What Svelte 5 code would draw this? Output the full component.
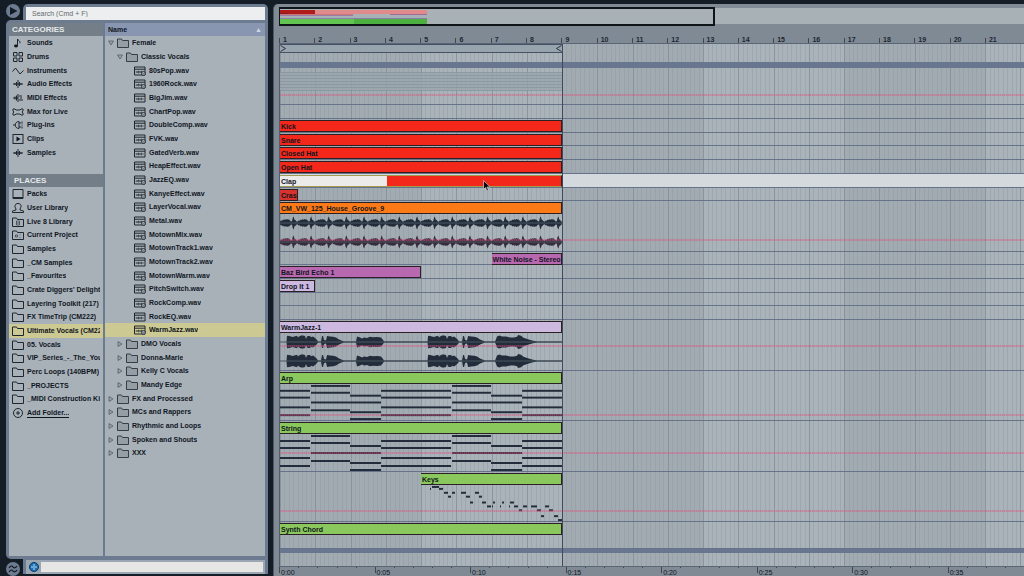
<script lang="ts">
  interface TreeRow {
    name: string;
    depth: number;
    kind: 'folder' | 'file';
    open?: boolean;
    warped?: boolean;
  }

  interface Lane {
    name?: string;
    start?: number;
    bars?: number;
    color?: string;
    height: number;
    body?: 'drums' | 'vocal' | 'chords' | 'keys' | 'group';
    automation?: number;
    editing?: boolean;
  }

  const categories = [
    ['note', 'Sounds'],
    ['drums', 'Drums'],
    ['wave', 'Instruments'],
    ['audio', 'Audio Effects'],
    ['midi', 'MIDI Effects'],
    ['max', 'Max for Live'],
    ['plug', 'Plug-ins'],
    ['clip', 'Clips'],
    ['audio', 'Samples'],
  ];

  const places = [
    ['pack', 'Packs'],
    ['user', 'User Library'],
    ['live8', 'Live 8 Library'],
    ['project', 'Current Project'],
    ['place', 'Samples'],
    ['place', '_CM Samples'],
    ['place', '_Favourites'],
    ['place', "Crate Diggers' Delight"],
    ['place', 'Layering Toolkit (217)'],
    ['place', 'FX TimeTrip (CM222)'],
    ['place', 'Ultimate Vocals (CM223)'],
    ['place', '05. Vocals'],
    ['place', 'VIP_Series_-_The_Young'],
    ['place', 'Perc Loops (140BPM)'],
    ['place', '_PROJECTS'],
    ['place', '_MIDI Construction Kits'],
    ['add', 'Add Folder...'],
  ];

  const plainFiles = ['BigJim', 'DoubleComp', 'GatedVerb', 'MotownTrack2', 'RockEQ'];
  const files =
    '80sPop 1960Rock BigJim ChartPop DoubleComp FVK GatedVerb HeapEffect JazzEQ KanyeEffect LayerVocal Metal MotownMix MotownTrack1 MotownTrack2 MotownWarm PitchSwitch RockComp RockEQ WarmJazz'.split(
      ' ',
    );

  const folder = (name: string, depth: number, open = false): TreeRow => ({
    name,
    depth,
    kind: 'folder',
    open,
  });

  const tree: TreeRow[] = [
    folder('Female', 0, true),
    folder('Classic Vocals', 1, true),
    ...files.map((f): TreeRow => ({
      name: `${f}.wav`,
      depth: 2,
      kind: 'file',
      warped: !plainFiles.includes(f),
    })),
    folder('DMO Vocals', 1),
    folder('Donna-Marie', 1),
    folder('Kelly C Vocals', 1),
    folder('Mandy Edge', 1),
    folder('FX and Processed', 0),
    folder('MCs and Rappers', 0),
    folder('Rhythmic and Loops', 0),
    folder('Spoken and Shouts', 0),
    folder('XXX', 0),
  ];

  const RED = '#f3281b';
  const GREEN = '#8ac75c';
  const PURPLE = '#b868ae';
  const LILAC = '#cdb9e0';

  const lanes: Lane[] = [
    { height: 37, body: 'group', start: 0, bars: 8, automation: 26 },
    { height: 14 },
    { name: 'Kick', start: 0, bars: 8, color: RED, height: 14 },
    { name: 'Snare', start: 0, bars: 8, color: RED, height: 13 },
    { name: 'Closed Hat', start: 0, bars: 8, color: RED, height: 14 },
    { name: 'Open Hat', start: 0, bars: 8, color: RED, height: 14 },
    { name: 'Clap', start: 0, bars: 8, color: RED, height: 14, editing: true },
    { name: 'Crash', start: 0, bars: 0.52, color: '#d9322c', height: 13 },
    { name: 'CM_VW_125_House_Groove_9', start: 0, bars: 8, color: '#fb7a17', height: 51, body: 'drums', automation: 38 },
    { name: 'White Noise - Stereo', start: 6, bars: 2, color: PURPLE, height: 13 },
    { name: 'Baz Bird Echo 1', start: 0, bars: 4, color: PURPLE, height: 14 },
    { name: 'Drop It 1', start: 0, bars: 1, color: LILAC, height: 14 },
    { height: 13 },
    { height: 14 },
    { name: 'WarmJazz-1', start: 0, bars: 8, color: LILAC, height: 51, body: 'vocal', automation: 25 },
    { name: 'Arp', start: 0, bars: 8, color: GREEN, height: 50, body: 'chords', automation: 43 },
    { name: 'String', start: 0, bars: 8, color: GREEN, height: 51, body: 'chords', automation: 31 },
    { name: 'Keys', start: 4, bars: 4, color: GREEN, height: 50, body: 'keys', automation: 38 },
    { name: 'Synth Chord', start: 0, bars: 8, color: GREEN, height: 27 },
  ];

  const barNumbers = Array.from({ length: 21 }, (_, i) => i + 1);
  const times = ['0:00', '0:05', '0:10', '0:15', '0:20', '0:25', '0:30', '0:35'];

  // Mirrors an envelope of [x, amplitude] points around a centre line.
  function mirror(env: number[][], cy: number): string {
    const top = env.map(([x, a]) => `${x},${cy - a}`);
    const bottom = [...env].reverse().map(([x, a]) => `${x},${cy + a}`);
    return [...top, ...bottom].join(' ');
  }

  const beat = [
    [0, 1.4], [1, 2.6], [2, 2.2], [3, 3.4], [4, 3], [5, 3.8], [6, 3.2], [7, 4], [8, 3.4], [9, 3.6],
    [10, 2.6], [11, 1.4], [12, 1.8], [12.7, 5], [13.6, 6.4], [14.4, 3.4], [15.2, 3], [16.2, 2], [17, 1.2],
  ];
  const drumEnv = Array.from({ length: 16 }, (_, n) =>
    beat.map(([x, a]) => [x + n * 17.65, a]),
  ).flat();

  const phrase = [
    [6.5, 0.4], [7, 6.2], [9, 6], [11, 5.4], [13, 5], [15, 5.8], [17, 6.2], [18, 4.6], [19, 5.4], [21, 6.6],
    [23, 6.4], [25, 6], [26, 3], [27, 5.4], [28, 6], [30, 6], [31, 4.8], [33, 5.4], [35, 4], [37, 2],
    [38, 0.4], [41, 0.4], [42, 6], [43, 6], [44, 2], [46, 1.6], [47, 6], [50, 5.6], [53, 5.2], [56, 4.4],
    [59, 2.6], [62, 1.2], [64, 0.4],
  ];
  const vocalEnv = [
    ...phrase,
    [76, 0.4], [77, 5.4], [80, 4.6], [82, 3.4], [84, 4.4], [87, 4], [90, 5.2], [93, 4.8], [97, 5],
    [101, 4.4], [103, 2], [104, 0.4],
    ...phrase.map(([x, a]) => [x + 141, a]),
    [215, 0.4], [217, 5.4], [219, 6.4], [222, 5.4], [226, 5.4], [230, 4.6], [234, 4.4], [237, 5.2], [238, 7],
    [241, 6.2], [243, 4.4], [247, 3], [252, 1.4], [257, 0.4], [282, 0.4],
  ];

  const voicings = [
    { x: 0, w: 30, ys: [6, 13, 23, 31] },
    { x: 31, w: 39, ys: [1, 8, 18, 26] },
    { x: 70, w: 31, ys: [11, 18, 28, 35] },
    { x: 101, w: 40, ys: [6, 13, 23, 31] },
  ];
  const chordNotes = [0, 141].flatMap((off) =>
    voicings.flatMap((v) => v.ys.map((y) => ({ x: v.x + off, w: v.w, y }))),
  );

  const keyNotes = [
    [9, 1, 3], [11, 7, 1], [18, 4, 3], [23, 4, 7], [27, 3, 11], [31, 3, 7], [40, 5, 7], [45, 4, 11],
    [49, 3, 17], [54, 4, 7], [58, 3, 11], [61, 4, 17], [66, 4, 21], [71, 1, 21], [72, 2, 17],
    [79, 1, 21], [81, 2, 17], [88, 1, 21], [89, 4, 17], [93, 4, 21], [98, 3, 25], [102, 4, 21],
    [110, 6, 21], [116, 4, 25], [120, 3, 31], [124, 4, 21], [128, 4, 25], [133, 4, 31], [137, 4, 35],
  ];

  let selectedPlace = $state('Ultimate Vocals (CM223)');
  let selectedFile = $state('WarmJazz.wav');
  let query = $state('');
  let status = $state('');
  let clipName = $state('Clap');
</script>

{#snippet icon(name: string)}
  <svg class="icon" viewBox="0 0 12 10" aria-hidden="true">
    {#if name === 'note'}
      <ellipse cx="4" cy="8" rx="2" ry="1.4" class="solid" />
      <path d="M5.5 8V1c.5 1.7 3 1.8 2.5 4.2" />
    {:else if name === 'drums'}
      <path d="M1.5 .5h3.500v3.500h-3.500zM7 .5h3.500v3.500H7zM1.5 6h3.500v3.500h-3.500zM7 6h3.500v3.500H7z" />
    {:else if name === 'wave'}
      <path d="M.5 5.5L3.5 2l4.5 6L11.500 4.500" />
    {:else if name === 'audio'}
      <path d="M1 5h10M3 4v2M4.500 3v4M6 1v8M7.500 3v4M9 4v2" />
    {:else if name === 'midi'}
      <path d="M1 5h5M3 3.500v3M4.500 2.500v5M6 1v8M7 3h3M8 5h2M7 7h4" />
    {:else if name === 'max'}
      <path d="M1 4V2h2l1 1h4l1-1h2v2M1 6v2h2l1-1h4l1 1h2V6M1.500 4v2M10.500 4v2" />
    {:else if name === 'plug'}
      <path d="M1 5h2M7 1.500c-5 0-5 7 0 7zM7 3h2M7 7h2M10 1.500v2M10 6.500v2M10 4.500v1" />
    {:else if name === 'clip'}
      <rect x="1" y="0.5" width="10" height="9" />
      <path d="M4.500 2.500v5l4-2.500z" class="solid" />
    {:else if name === 'pack'}
      <path d="M1 .5h10v9H1zM1 8.500h10" />
    {:else if name === 'user'}
      <path d="M.5 9.500h11V8L8 7V6c2-3 1-5.500-2-5.500S2 3 4 6v1L.5 8z" />
    {:else if name === 'add'}
      <circle cx="6" cy="5" r="4.500" />
      <path d="M4 5h4M6 3v4" />
    {:else if name === 'file' || name === 'warped'}
      <path d="M.5 1h10.500v8H.5zM.5 3.200h10.500" />
      <path d="M1.500 6h8.500M3 5v2M4.500 4.600v2.800M6 5v2M7.500 4.600v2.800" class="thin" />
      {#if name === 'warped'}
        <circle cx="9.500" cy="7.500" r="2" class="badge" />
        <path d="M8.700 7.500l.8.700 1.200-1.600" class="thin" />
      {/if}
    {:else}
      <path d="M.5 9.500V1h4l1 1.500h6v7z" class:filled={name === 'folder'} />
      {#if name === 'live8'}
        <path d="M4.500 4h3v4h-3zM4.500 6h3" class="thin" />
      {:else if name === 'project'}
        <path d="M3.500 5h2v2h-2zM8 4.500v1M8 7v1" class="thin" />
      {/if}
    {/if}
  </svg>
{/snippet}

<div class="app">
  <aside class="browser">
    <header class="tab top">
      <button class="round" aria-label="Hide browser">
        <svg viewBox="0 0 14 14"><path d="M4 3v8l7.500-4z" /></svg>
      </button>
      <div class="shell">
        <input type="search" class="search" placeholder="Search (Cmd + F)" aria-label="Search" bind:value={query} />
      </div>
    </header>

    <div class="panes">
      <nav class="sidebar">
        <h2>CATEGORIES</h2>
        <ul>
          {#each categories as [glyph, label] (label)}
            <li><button>{@render icon(glyph)}<span>{label}</span></button></li>
          {/each}
        </ul>
        <h2 class="places">PLACES</h2>
        <ul>
          {#each places as [glyph, label] (label)}
            <li class:selected={label === selectedPlace}>
              <button onclick={() => (selectedPlace = label)}>
                {@render icon(glyph)}<span class:add={glyph === 'add'}>{label}</span>
              </button>
            </li>
          {/each}
        </ul>
      </nav>

      <section class="files">
        <button class="sort"><span>Name</span><span class="arrow">▲</span></button>
        <ul>
          {#each tree as row (row.name)}
            <li class="depth-{row.depth}" class:selected={row.name === selectedFile}>
              <button onclick={() => (selectedFile = row.name)}>
                {#if row.kind === 'folder'}
                  <svg class="twist" viewBox="0 0 6 6" aria-hidden="true">
                    <path d={row.open ? 'M.5 1h5l-2.500 4z' : 'M1 .5v5l4-2.500z'} />
                  </svg>
                  {@render icon('folder')}
                {:else}
                  {@render icon(row.warped ? 'warped' : 'file')}
                {/if}
                <span>{row.name}</span>
              </button>
            </li>
          {/each}
        </ul>
      </section>
    </div>

    <footer class="tab bottom">
      <button class="round" aria-label="Groove pool">
        <svg viewBox="0 0 14 14" class="waves">
          <path d="M3 6c2-3 3.500-2 4-1s2.500 1.500 4-1M3 10c2-3 3.500-2 4-1s2.500 1.500 4-1" />
        </svg>
      </button>
      <div class="shell">
        <button class="preview" aria-label="Preview">
          <svg viewBox="0 0 10 10"><circle cx="5" cy="5" r="4.500" /><path d="M5 2v6M3 4v2M7 4v2" /></svg>
        </button>
        <input type="text" class="status" aria-label="Preview position" bind:value={status} />
      </div>
    </footer>
  </aside>

  <main class="arrangement">
    <div class="overview">
      <div class="viewport">
        <svg viewBox="0 0 433 15" preserveAspectRatio="none" aria-hidden="true">
          <rect x="0" y="1" width="35" height="4" fill="#b01c1c" />
          <rect x="35" y="1" width="112" height="4" fill="#e08a8c" />
          <rect x="0" y="4" width="9" height="1" fill="#8c1c1c" />
          <rect x="0" y="5" width="73" height="1" fill="#c87876" />
          <rect x="0" y="6" width="73" height="1" fill="#9d7ba8" />
          <rect x="110" y="5" width="37" height="1" fill="#9d6c9c" />
          <rect x="0" y="9" width="147" height="1" fill="#8a7fa6" />
          <rect x="0" y="10" width="74" height="5" fill="#62c552" />
          <rect x="74" y="10" width="73" height="5" fill="#4bb03f" />
        </svg>
      </div>
    </div>

    <div class="ruler">
      {#each barNumbers as n (n)}
        <span>{n}</span>
      {/each}
    </div>

    <div class="canvas">
      <div class="loop">
        <svg viewBox="0 0 6 7"><path d="M.5.5L5.500 3.500.5 6.500" /></svg>
        <svg viewBox="0 0 6 7"><path d="M5.500.5L.5 3.500l5 3" /></svg>
      </div>
      <div class="scrub"></div>
      <div class="band"></div>

      {#each lanes as lane, i (i)}
        <div class="lane" class:active={lane.editing} style="height: {lane.height}px">
          {#if lane.bars}
            <div
              class="block"
              style="margin-left: calc(var(--bar) * {lane.start}); width: calc(var(--bar) * {lane.bars})"
            >
              {#if lane.editing}
                <div class="clip editing" style="background: {lane.color}">
                  <input type="text" aria-label="Clip name" bind:value={clipName} />
                </div>
              {:else if lane.name}
                <div class="clip" style="background: {lane.color}">{lane.name}</div>
              {/if}

              {#if lane.body === 'group'}
                <div class="stripes"></div>
              {:else if lane.body === 'drums' || lane.body === 'vocal'}
                <svg class="content" viewBox="0 0 282 37" preserveAspectRatio="none" aria-hidden="true">
                  {#each [9, 28] as cy (cy)}
                    <polygon
                      points={mirror(lane.body === 'drums' ? drumEnv : vocalEnv, cy)}
                      class:tinted={lane.body === 'drums' && cy === 28}
                    />
                    <rect x="0" y={cy - 0.5} width="282" height="1" class="centre" />
                  {/each}
                </svg>
              {:else if lane.body === 'chords'}
                <svg class="content" viewBox="0 0 282 37" preserveAspectRatio="none" aria-hidden="true">
                  {#each chordNotes as n, k (k)}
                    <rect x={n.x} y={n.y} width={n.w} height="2" />
                  {/each}
                </svg>
              {:else if lane.body === 'keys'}
                <svg class="content" viewBox="0 0 141 37" preserveAspectRatio="none" aria-hidden="true">
                  {#each keyNotes as [x, w, y], k (k)}
                    <rect {x} {y} width={w} height="2" />
                  {/each}
                </svg>
              {/if}
            </div>
          {/if}
          {#if lane.automation}
            <div class="automation" style="top: {lane.automation}px"></div>
          {/if}
        </div>
      {/each}

      <div class="band thin"></div>
      <div class="end-marker"></div>
      <svg class="pointer" viewBox="0 0 8 12" aria-hidden="true">
        <path d="M.5.5v9l2-2 1.500 3.500 1.500-.7L4 7h3.200z" />
      </svg>
    </div>

    <div class="times">
      {#each times as t (t)}
        <span>{t}</span>
      {/each}
    </div>
  </main>
</div>

<style>
  :global(body) {
    background: #141d25;
  }

  .app {
    display: flex;
    gap: 5px;
    height: 100vh;
    overflow: hidden;
    padding: 4px 0 0 6px;
    box-sizing: border-box;
    font: bold 7px/12px 'Liberation Sans', Arial, sans-serif;
    color: #10161f;
    background: #141d25;
  }

  .app :is(div, aside, main, nav, section, header, footer, input, span) {
    box-sizing: border-box;
  }

  button,
  input {
    margin: 0;
    padding: 0;
    border: 0;
    font: inherit;
    color: inherit;
    background: none;
  }

  ul {
    margin: 0;
    padding: 0;
    list-style: none;
  }

  .browser {
    flex: 0 0 262px;
    display: flex;
    flex-direction: column;
  }

  .tab {
    display: flex;
    gap: 3px;
    flex: none;
  }

  .tab .shell {
    flex: 1;
    display: flex;
    align-items: center;
    padding: 0 3px;
    background: #6d7b91;
  }

  .top .shell {
    height: 16px;
    padding-top: 3px;
    border-radius: 5px 5px 0 0;
  }

  .bottom .shell {
    height: 15px;
  }

  .round {
    width: 14px;
    height: 14px;
    border-radius: 50%;
    background: #6d7b91;
  }

  .bottom .round {
    margin-top: 3px;
  }

  .round svg {
    display: block;
    fill: #131c24;
  }

  .round .waves {
    fill: none;
    stroke: #131c24;
    stroke-width: 1.2;
  }

  .search {
    width: 100%;
    height: 13px;
    padding: 0 6px;
    font-weight: normal;
    background: #eceeef;
  }

  .search::placeholder {
    color: #666a6e;
    opacity: 1;
  }

  .preview {
    display: flex;
    align-items: center;
    justify-content: center;
    width: 15px;
    height: 14px;
    background: #9ba8b4;
  }

  .preview svg {
    width: 10px;
    height: 10px;
    fill: #1d6fb4;
    stroke: #123a60;
  }

  .preview path {
    stroke: #b8dcf2;
  }

  .status {
    flex: 1;
    height: 14px;
    border: 2px solid #9ba8b4;
    border-left-width: 0;
    background: #e6e7e4;
  }

  .panes {
    flex: 1;
    min-height: 0;
    display: flex;
    gap: 2px;
    padding: 3px;
    border-radius: 5px 0 0 5px;
    background: #6d7b91;
  }

  .sidebar {
    flex: 0 0 94px;
    overflow: hidden;
    background: #a8b1b8;
  }

  .files {
    flex: 1;
    background: #a8b1b8;
  }

  h2 {
    margin: 0;
    padding: 0 3px;
    font-size: 8px;
    line-height: 13px;
    color: #e6e9eb;
    background: #737e88;
  }

  .places {
    margin-top: 15px;
    padding-left: 5px;
  }

  li {
    height: 14px;
  }

  li:nth-child(3n) {
    height: 13px;
  }

  li button {
    display: flex;
    align-items: center;
    gap: 3px;
    width: 100%;
    height: 100%;
    padding: 0 3px;
    text-align: left;
    white-space: nowrap;
  }

  li span {
    overflow: hidden;
  }

  .selected {
    background: #cdc992;
  }

  .add {
    text-decoration: underline;
    text-underline-offset: 2px;
  }

  .icon {
    flex: none;
    width: 12px;
    height: 10px;
    fill: none;
    stroke: #1e2731;
    stroke-width: 1;
  }

  .icon .solid {
    fill: #10161f;
    stroke: none;
  }

  .icon .thin {
    stroke-width: 0.6;
  }

  .icon .badge {
    fill: #a8b1b8;
    stroke-width: 0.8;
  }

  .icon .filled {
    fill: #959ea5;
    stroke: #343e48;
  }

  .sort {
    display: flex;
    justify-content: space-between;
    align-items: center;
    width: 100%;
    height: 13px;
    padding: 0 3px;
    background: #8996b2;
  }

  .arrow {
    color: #cfd6e0;
  }

  .twist {
    flex: none;
    width: 6px;
    height: 6px;
    fill: #98a1a8;
    stroke: #56606a;
    stroke-width: 0.8;
  }

  .files .depth-1 button {
    padding-left: 12px;
  }

  .files .depth-2 button {
    padding-left: 29px;
  }

  .arrangement {
    --bar: calc(100% / 21.1);
    flex: 1;
    min-width: 0;
    padding: 3px 0 0 5px;
    border-left: 1px solid #4d5965;
    border-radius: 5px 0 0 0;
    background: #7f8a94;
  }

  .overview {
    height: 19px;
    background: linear-gradient(#7f8a94 1px, #a7b1b6 1px 17px, #7f8a94 17px);
  }

  .viewport {
    width: calc(var(--bar) * 12.35);
    height: 19px;
    border: 2px solid #0e1418;
    border-left-width: 1px;
  }

  .viewport svg {
    display: block;
    width: 100%;
    height: 15px;
  }

  .ruler {
    display: flex;
    height: 18px;
    padding-top: 9px;
    overflow: hidden;
    border-bottom: 1px solid #5a6675;
  }

  .ruler span {
    flex: 0 0 var(--bar);
    height: 8px;
    padding-left: 4px;
    line-height: 10px;
    color: #1d2633;
    background: linear-gradient(#3d4856, #3d4856) 0 100% / 1px 5px no-repeat;
  }

  .canvas {
    position: relative;
    border-left: 1px solid #515d6d;
    padding-bottom: 13px;
    background:
      repeating-linear-gradient(90deg, #7d899399 0 1px, transparent 1px var(--bar)),
      repeating-linear-gradient(90deg, #8a969e66 0 1px, transparent 1px calc(var(--bar) / 8)),
      repeating-linear-gradient(90deg, #a1abb1 0 calc(var(--bar) * 4), #a9b3b9 0 calc(var(--bar) * 8));
  }

  .loop {
    display: flex;
    justify-content: space-between;
    align-items: center;
    width: calc(var(--bar) * 8);
    height: 9px;
    border: solid #465163;
    border-width: 1px 0;
    background: #98a4ad;
  }

  .loop svg {
    width: 6px;
    height: 7px;
    fill: none;
    stroke: #2b3644;
  }

  .scrub {
    height: 9px;
  }

  .band {
    height: 6px;
    background: #687690;
  }

  .band.thin {
    height: 4px;
  }

  .lane {
    position: relative;
    border-bottom: 1px solid #66738a;
  }

  .lane.active {
    background: #d3d9dd;
  }

  .block {
    display: flex;
    flex-direction: column;
    height: 100%;
    padding-top: 1px;
  }

  .clip {
    flex: none;
    height: 12px;
    padding: 0 1px;
    overflow: hidden;
    white-space: nowrap;
    line-height: 11px;
    border: 1px solid #2b2024;
    border-left-width: 0;
  }

  .clip.editing {
    padding: 0;
    border-color: #a39b52;
    border-right-color: #2b2024;
  }

  .clip input {
    display: block;
    width: 38%;
    height: 10px;
    padding: 0 1px;
    background: #ecebea;
  }

  .stripes {
    height: 19px;
    margin-top: 3px;
    background: repeating-linear-gradient(#87949e 0 1px, #9aa5ad 1px 3px);
    opacity: 0.8;
  }

  .content {
    display: block;
    width: 100%;
    height: 37px;
    fill: #222c3a;
  }

  .content .tinted {
    fill: #372b3c;
  }

  .content .centre {
    fill: #4b5663;
  }

  .automation {
    position: absolute;
    left: 0;
    right: 0;
    height: 2px;
    background: repeating-linear-gradient(90deg, #e0507e77 0 1px, #e0507e44 1px 2px);
  }

  .end-marker {
    position: absolute;
    top: 0;
    bottom: 0;
    left: calc(var(--bar) * 8);
    border-left: 1px solid #3f4a5b;
  }

  .pointer {
    position: absolute;
    left: calc(var(--bar) * 5.77);
    top: 136px;
    width: 8px;
    height: 12px;
    fill: #0a0d10;
    stroke: #e8e8e8;
    stroke-width: 0.6;
  }

  .times {
    display: flex;
    height: 16px;
    overflow: hidden;
    border-top: 1px solid #5a6675;
    font-weight: normal;
  }

  .times span {
    flex: 0 0 calc(var(--bar) * 2.706);
    padding-left: 2px;
    line-height: 11px;
    background:
      linear-gradient(#3d4856, #3d4856) 0 0 / 1px 6px no-repeat,
      repeating-linear-gradient(90deg, #3d4856 0 1px, transparent 1px 20%) 0 0 / 100% 1px no-repeat;
  }
</style>
